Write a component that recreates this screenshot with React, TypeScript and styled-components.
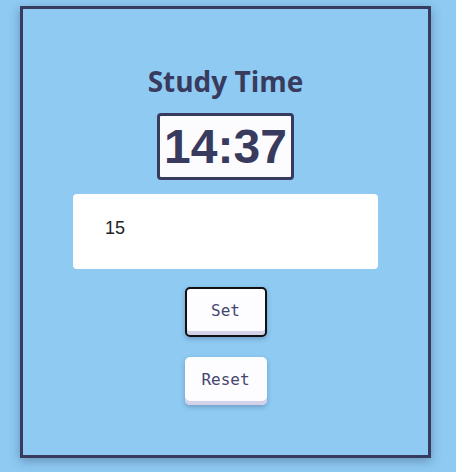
import { useState } from 'react';
import styled, { createGlobalStyle } from 'styled-components';

const GlobalStyle = createGlobalStyle`
    html, body {
        margin: 0;
        padding: 0;
        background: #8ecaf2;
    }
    * {
        box-sizing: border-box;
    }
`;

const Page = styled.div`
    padding: 6px 25px 14px 20px;
`;

const Card = styled.div`
    width: 411px;
    height: 452px;
    border: 3px solid #383a5e;
    background: #8ecaf2;
    box-shadow: 0 3px 10px rgba(30, 40, 80, 0.35);
    display: flex;
    flex-direction: column;
    align-items: center;
    padding-top: 52px;
`;

const Title = styled.h1`
    margin: 0;
    font-family: 'Open Sans', 'Noto Sans', sans-serif;
    font-size: 28px;
    font-weight: 700;
    line-height: 40px;
    color: #383a5e;
`;

const Clock = styled.div`
    margin-top: 12px;
    width: 137px;
    height: 67px;
    border: 3px solid #383a5e;
    border-radius: 4px;
    background: #fcfcff;
    display: flex;
    align-items: center;
    justify-content: center;
    font-family: 'Liberation Sans', Arial, sans-serif;
    font-weight: 700;
    font-size: 48px;
    color: #383a5e;
`;

const MinutesInput = styled.input`
    margin-top: 14px;
    width: 305px;
    height: 75px;
    border: none;
    border-radius: 4px;
    background: #fff;
    padding: 0 0 6px 32px;
    font-family: 'Liberation Sans', Arial, sans-serif;
    font-size: 18px;
    color: #222;
    outline: none;
`;

const Button = styled.button<{ $focused?: boolean; $top: number }>`
    margin-top: ${(p) => p.$top}px;
    width: 82px;
    height: ${(p) => (p.$focused ? 50 : 48)}px;
    border: ${(p) => (p.$focused ? '2px solid #111' : 'none')};
    border-radius: 5px;
    background: #fdfcff;
    box-shadow: inset 0 -4px 0 #d4d2e8, 0 2px 5px rgba(40, 50, 90, 0.3);
    font-family: 'DejaVu Sans Mono', 'Liberation Mono', monospace;
    font-size: 16px;
    color: #45466e;
    padding: 0 0 3px;
    cursor: pointer;
`;

export default function App() {
    const [minutes, setMinutes] = useState('15');

    return (
        <>
            <GlobalStyle />
            <Page>
                <Card>
                    <Title>Study Time</Title>
                    <Clock>14:37</Clock>
                    <MinutesInput value={minutes} onChange={(e) => setMinutes(e.target.value)} />
                    <Button $focused $top={18}>
                        Set
                    </Button>
                    <Button $top={20}>Reset</Button>
                </Card>
            </Page>
        </>
    );
}
